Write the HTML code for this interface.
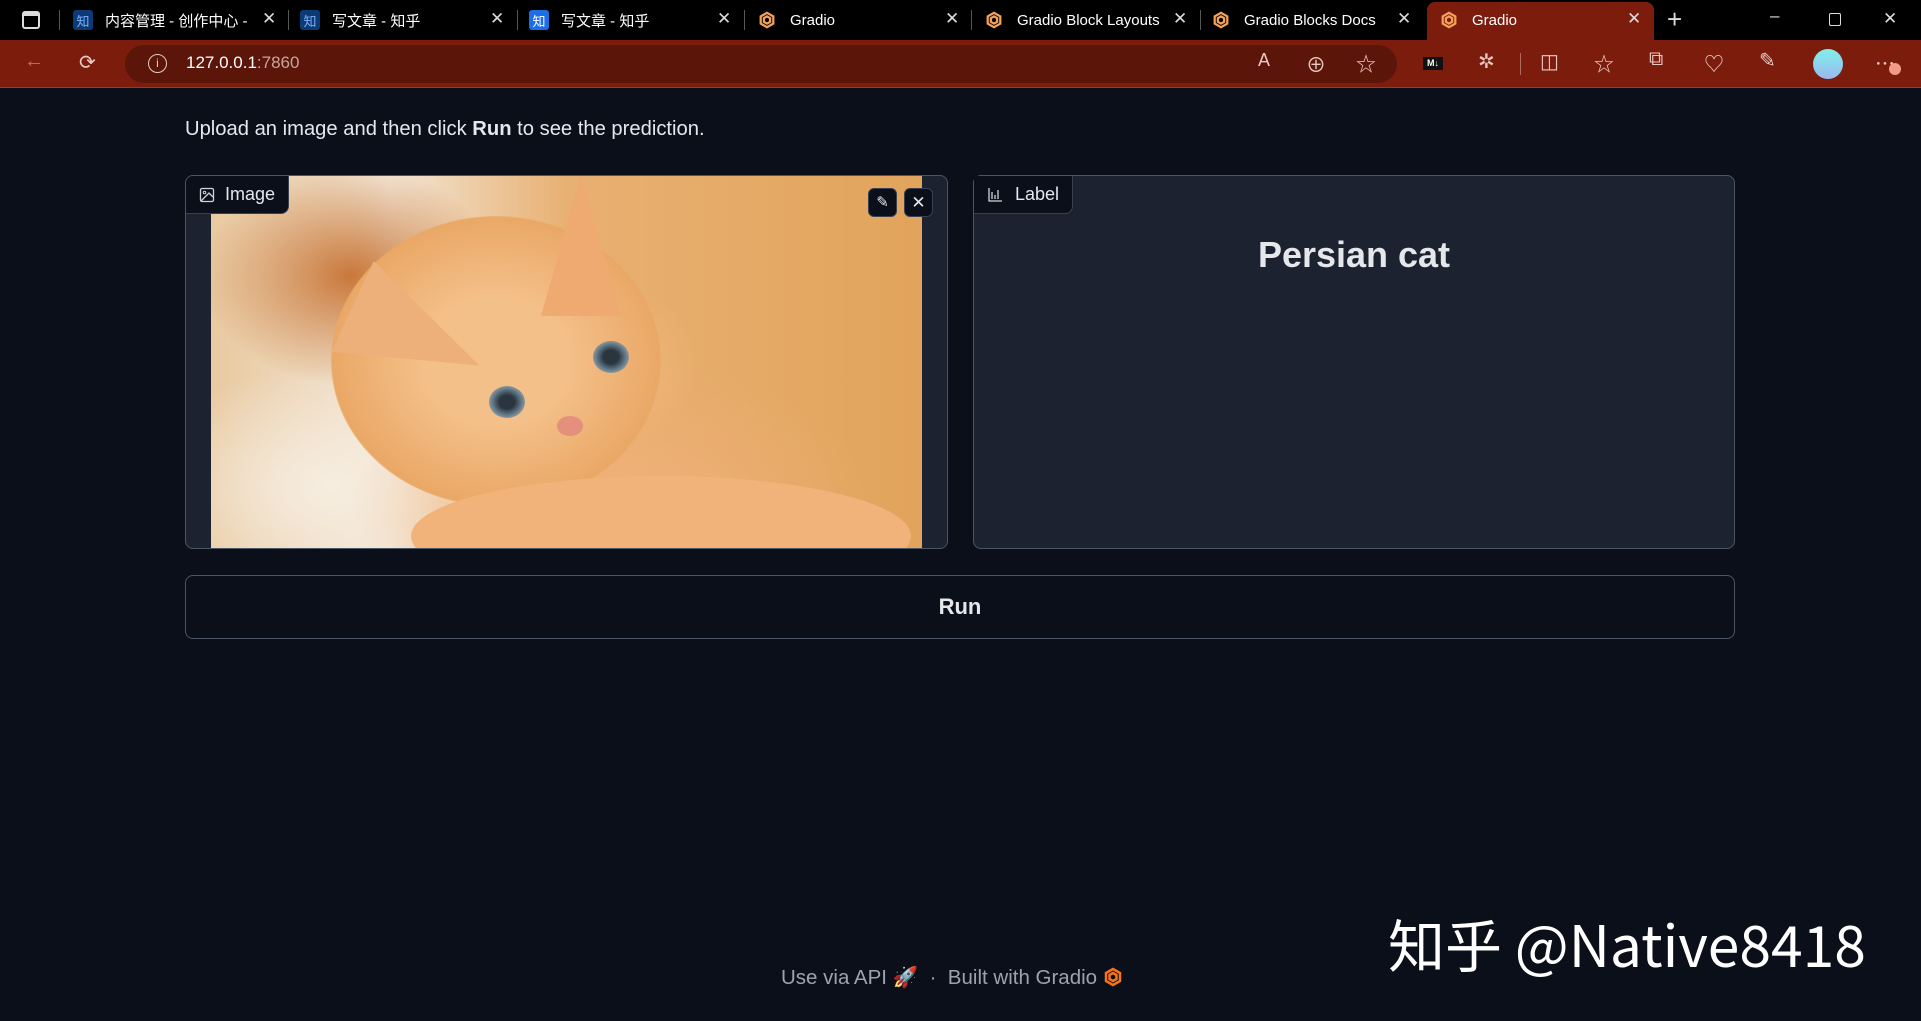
<!DOCTYPE html>
<html><head><meta charset="utf-8"><style>
*{box-sizing:border-box;margin:0;padding:0}
body{width:1921px;height:1021px;overflow:hidden;background:#0b0f19;font-family:"Liberation Sans","Noto Sans CJK SC",sans-serif;color:#e5e7eb;position:relative}
.abs{position:absolute}
.tabbar{left:0;top:0;width:1921px;height:40px;background:#000}
.tab{position:absolute;top:0;height:40px;display:flex;align-items:center;font-size:15px;color:#fff}
.sep{position:absolute;top:10px;width:1px;height:20px;background:#555}
.zh{width:20px;height:20px;border-radius:3px;background:#0c3a75;color:#7fb0ff;font-size:13px;display:flex;align-items:center;justify-content:center;margin-right:12px}
.gr{width:18px;height:18px;margin-right:14px}
.x{position:absolute;font-size:17px;color:#ddd}
.toolbar{left:0;top:40px;width:1921px;height:48px;background:#7c1c0d;border-bottom:1px solid #9a3a2a}
.addr{left:125px;top:45px;width:1272px;height:38px;border-radius:19px;background:#5c1509}
.ic{position:absolute;color:#e8c9c2;font-size:20px}
.panel{border:1px solid #4b5563;border-radius:8px;background:#1c2230}
.lbl{position:absolute;left:0;top:0;height:39px;background:#0b0f19;border-right:1px solid #374151;border-bottom:1px solid #374151;border-bottom-right-radius:8px;display:flex;align-items:center;padding:0 13px;font-size:18px;color:#e5e7eb}
</style></head><body>
<div class="abs tabbar">
 <div class="tab" style="left:22px"><div style="width:18px;height:18px;border:2px solid #ddd;border-radius:3px;border-top-width:5px"></div></div>
 <div class="sep" style="left:59px"></div>
 <div class="tab" style="left:73px"><div class="zh">知</div>内容管理 - 创作中心 -</div><div class="x" style="left:262px;top:9px">✕</div>
 <div class="sep" style="left:288px"></div>
 <div class="tab" style="left:300px"><div class="zh">知</div>写文章 - 知乎</div><div class="x" style="left:490px;top:9px">✕</div>
 <div class="sep" style="left:517px"></div>
 <div class="tab" style="left:529px"><div class="zh" style="background:#1e6fe6;color:#fff">知</div>写文章 - 知乎</div><div class="x" style="left:717px;top:9px">✕</div>
 <div class="sep" style="left:744px"></div>
 <div class="tab" style="left:758px"><svg class="gr" viewBox="0 0 20 20"><path d="M10 2L17 6V14L10 18L3 14V6Z M10 6L13.5 8V12L10 14L6.5 12V8Z" fill="none" stroke="#f4a15a" stroke-width="2.5"/></svg>Gradio</div><div class="x" style="left:945px;top:9px">✕</div>
 <div class="sep" style="left:971px"></div>
 <div class="tab" style="left:985px"><svg class="gr" viewBox="0 0 20 20"><path d="M10 2L17 6V14L10 18L3 14V6Z M10 6L13.5 8V12L10 14L6.5 12V8Z" fill="none" stroke="#f4a15a" stroke-width="2.5"/></svg>Gradio Block Layouts</div><div class="x" style="left:1173px;top:9px">✕</div>
 <div class="sep" style="left:1200px"></div>
 <div class="tab" style="left:1212px"><svg class="gr" viewBox="0 0 20 20"><path d="M10 2L17 6V14L10 18L3 14V6Z M10 6L13.5 8V12L10 14L6.5 12V8Z" fill="none" stroke="#f4a15a" stroke-width="2.5"/></svg>Gradio Blocks Docs</div><div class="x" style="left:1397px;top:9px">✕</div>
 <div class="abs" style="left:1427px;top:2px;width:227px;height:38px;background:#7c1c0d;border-radius:8px 8px 0 0"></div>
 <div class="tab" style="left:1440px"><svg class="gr" viewBox="0 0 20 20"><path d="M10 2L17 6V14L10 18L3 14V6Z M10 6L13.5 8V12L10 14L6.5 12V8Z" fill="none" stroke="#f4a15a" stroke-width="2.5"/></svg>Gradio</div><div class="x" style="left:1627px;top:9px">✕</div>
 <div class="x" style="left:1667px;top:4px;font-size:26px">+</div>
 <div class="x" style="left:1770px;top:6px">–</div>
 <div class="abs" style="left:1829px;top:13px;width:12px;height:13px;border:1.5px solid #ddd;border-radius:2px"></div>
 <div class="x" style="left:1883px;top:9px">✕</div>
</div>
<div class="abs toolbar"></div>
<div class="abs addr"></div>
<div class="ic" style="left:24px;top:50px;color:#b07a6e">←</div>
<div class="ic" style="left:79px;top:50px">⟳</div>
<div class="abs" style="left:148px;top:54px;width:19px;height:19px;border:1.5px solid #e8c9c2;border-radius:50%;font-size:12px;text-align:center;line-height:16px;color:#e8c9c2">i</div>
<div class="abs" style="left:186px;top:53px;font-size:17px;color:#fff">127.0.0.1<span style="color:#caa59c">:7860</span></div>
<div class="ic" style="left:1258px;top:50px;font-size:18px">A</div>
<div class="ic" style="left:1306px;top:49px">⊕</div>
<div class="ic" style="left:1356px;top:48px">☆</div>
<div class="abs" style="left:1423px;top:57px;width:20px;height:13px;background:#111;color:#fff;font-size:9px;font-weight:bold;text-align:center;line-height:13px">M↓</div>
<div class="ic" style="left:1478px;top:49px">✲</div>
<div class="abs" style="left:1520px;top:53px;width:1px;height:22px;background:#b06a5e"></div>
<div class="ic" style="left:1540px;top:49px">◫</div>
<div class="ic" style="left:1594px;top:48px">☆</div>
<div class="ic" style="left:1649px;top:48px">⧉</div>
<div class="ic" style="left:1704px;top:48px">♡</div>
<div class="ic" style="left:1759px;top:48px">✎</div>
<div class="abs" style="left:1813px;top:49px;width:30px;height:30px;border-radius:50%;background:linear-gradient(#7ff0e8,#9ab8f0)"></div>
<div class="ic" style="left:1875px;top:48px">⋯</div>
<div class="abs" style="left:1889px;top:63px;width:12px;height:12px;border-radius:50%;background:#f39a8a"></div>

<div class="abs" style="left:185px;top:118px;font-size:20.2px;color:#e5e7eb">Upload an image and then click <b>Run</b> to see the prediction.</div>

<div class="abs panel" style="left:185px;top:175px;width:763px;height:374px;overflow:hidden">
 <div class="abs" style="left:25px;top:0;width:711px;height:374px;overflow:hidden;background:
  radial-gradient(ellipse 90px 80px at 400px 190px,#f2b87c,transparent),
  radial-gradient(ellipse 260px 150px at 400px 330px,#f0b078,transparent),
  radial-gradient(ellipse 150px 110px at 140px 100px,#c9783a,transparent),
  radial-gradient(ellipse 200px 120px at 120px 310px,#f6ede0,transparent),
  linear-gradient(90deg,#e9c9a0 0%,#f2e6d6 25%,#e8b072 50%,#e2a45c 100%)">
  <div class="abs" style="left:120px;top:40px;width:330px;height:290px;border-radius:50%;background:radial-gradient(ellipse at 50% 50%,#f4c08a 30%,#eaa866 70%,transparent 72%)"></div>
  <div class="abs" style="left:330px;top:0;width:0;height:0;border-left:40px solid transparent;border-right:40px solid transparent;border-bottom:140px solid #eeaa70"></div>
  <div class="abs" style="left:135px;top:110px;width:0;height:0;border-top:50px solid transparent;border-bottom:50px solid transparent;border-left:140px solid #eeb07a;transform:rotate(25deg)"></div>
  <div class="abs" style="left:382px;top:165px;width:36px;height:32px;border-radius:50%;background:radial-gradient(#2a3540 30%,#6a8090 60%,#f0d0b0 100%)"></div>
  <div class="abs" style="left:278px;top:210px;width:36px;height:32px;border-radius:50%;background:radial-gradient(#2a3540 30%,#6a8090 60%,#f0d0b0 100%)"></div>
  <div class="abs" style="left:346px;top:240px;width:26px;height:20px;border-radius:50%;background:#e4907c"></div>
  <div class="abs" style="left:200px;top:300px;width:500px;height:120px;border-radius:50%;background:#f2b37a"></div>
 </div>
 <div class="lbl" style="height:38px"><svg width="16" height="16" viewBox="0 0 16 16" style="margin-right:10px"><rect x="1.5" y="1.5" width="13" height="13" rx="1.5" fill="none" stroke="#d1d5db" stroke-width="1.3"/><circle cx="5.5" cy="5.5" r="1.3" fill="none" stroke="#d1d5db"/><path d="M14 10L10 6L2 14" fill="none" stroke="#d1d5db" stroke-width="1.3"/></svg>Image</div>
 <div class="abs" style="left:682px;top:12px;width:29px;height:29px;border-radius:6px;background:#0b0f19;border:1px solid #374151;color:#e5e7eb;font-size:15px;text-align:center;line-height:27px">✎</div>
 <div class="abs" style="left:718px;top:12px;width:29px;height:29px;border-radius:6px;background:#0b0f19;border:1px solid #374151;color:#e5e7eb;font-size:17px;text-align:center;line-height:27px">✕</div>
</div>

<div class="abs panel" style="left:973px;top:175px;width:762px;height:374px">
 <div class="lbl" style="height:38px"><svg width="16" height="16" viewBox="0 0 16 16" style="margin-right:12px"><path d="M2 1V14H15 M5 12V5 M8 12V8 M11 12V3" fill="none" stroke="#d1d5db" stroke-width="1.3"/></svg>Label</div>
 <div class="abs" style="left:0;width:760px;top:58px;text-align:center;font-size:36px;font-weight:bold;color:#e5e7eb">Persian cat</div>
</div>

<div class="abs" style="left:185px;top:575px;width:1550px;height:64px;border:1px solid #4b5563;border-radius:8px;background:#0b0f19;text-align:center;line-height:62px;font-size:22px;font-weight:bold;color:#e5e7eb">Run</div>

<div class="abs" style="left:1388px;top:902px;font-size:57px;color:#fff;font-family:'Noto Sans CJK SC','Liberation Sans',sans-serif;white-space:nowrap">知乎 @Native8418</div>

<div class="abs" style="left:781px;top:966px;font-size:20.5px;color:#9ca3af;white-space:nowrap">Use via API <span style="color:#f97316">🚀</span> &nbsp;·&nbsp; Built with Gradio <svg width="20" height="20" viewBox="0 0 20 20" style="vertical-align:-3px"><path d="M10 2L17 6V14L10 18L3 14V6Z M10 6L13.5 8V12L10 14L6.5 12V8Z" fill="none" stroke="#f97316" stroke-width="2.5"/></svg></div>
</body></html>
